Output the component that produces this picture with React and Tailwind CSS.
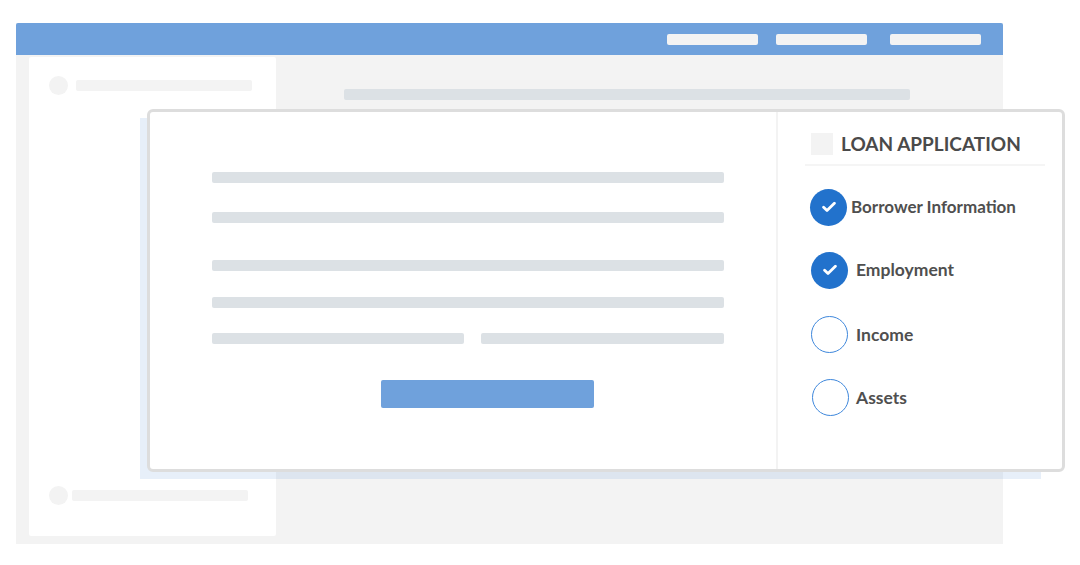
const bar = "h-[11px] rounded-[2px] bg-[#dce1e5]";
const steps = [
  { label: "Borrower Information", done: true, cls: "mt-[23px] ml-[32px]", text: "ml-[4px] -translate-y-[1px] text-[17px]" },
  { label: "Employment", done: true, cls: "mt-[26px] ml-[33px]", text: "ml-[8px] -translate-y-[1px] text-[17.5px]" },
  { label: "Income", done: false, cls: "mt-[27px] ml-[33px]", text: "ml-[8px] text-[17.5px]" },
  { label: "Assets", done: false, cls: "mt-[26px] ml-[34px]", text: "ml-[7px] text-[17.5px]" },
];

function Step({ label, done, cls, text }) {
  return (
    <div className={`flex items-center ${cls}`}>
      {done ? (
        <span className="flex h-[37px] w-[37px] items-center justify-center rounded-full bg-[#2272cc]">
          <svg width="14" height="11" viewBox="0 0 14 11" fill="none" className="-translate-y-[0.5px]">
            <path d="M1.6 5.8 5 9 12.4 1.8" stroke="#fff" strokeWidth="2.8" strokeLinecap="round" strokeLinejoin="round" />
          </svg>
        </span>
      ) : (
        <span className="h-[37px] w-[37px] rounded-full border-[1.5px] border-[#3f88dc]" />
      )}
      <span className={`${text} font-bold leading-none text-[#4f4f4f]`}>{label}</span>
    </div>
  );
}

export default function App() {
  return (
    <div className="relative h-[565px] w-[1080px] overflow-hidden bg-white pl-[16px] pt-[23px] font-['Lato',sans-serif]">
      <div className="flex h-[521px] w-[987px] flex-col bg-[#f3f3f3]">
        <header className="flex h-[32px] shrink-0 items-center justify-end rounded-t-[2px] bg-[#6fa1dc] pr-[22px]">
          <span className="h-[11px] w-[91px] rounded-[2px] bg-[#f3f3f3]" />
          <span className="ml-[18px] h-[11px] w-[91px] rounded-[2px] bg-[#f3f3f3]" />
          <span className="ml-[23px] h-[11px] w-[91px] rounded-[2px] bg-[#f3f3f3]" />
        </header>
        <div className="flex">
          <aside className="ml-[13px] mt-[2px] flex h-[479px] w-[247px] flex-col justify-between rounded-[2px] bg-white px-[20px] pb-[31px] pt-[19px]">
            <div className="flex items-center">
              <span className="h-[19px] w-[19px] rounded-full bg-[#f3f3f3]" />
              <span className="ml-[8px] h-[11px] w-[176px] rounded-[2px] bg-[#f3f3f3]" />
            </div>
            <div className="flex items-center">
              <span className="h-[19px] w-[19px] rounded-full bg-[#f3f3f3]" />
              <span className="ml-[4px] h-[11px] w-[176px] rounded-[2px] bg-[#f3f3f3]" />
            </div>
          </aside>
          <div className={`ml-[68px] mt-[34px] w-[566px] ${bar}`} />
        </div>
      </div>

      <div className="absolute left-[140px] top-[118px] h-[361px] w-[901px] bg-[#6fa1dc]/[.17]" />

      <section className="absolute left-[147px] top-[109px] flex h-[363px] w-[918px] rounded-[6px] border-[3px] border-[#dddddd] bg-white">
        <div className="w-[626px] pl-[62px] pt-[60px]">
          <div className={`w-[512px] ${bar}`} />
          <div className={`mt-[29px] w-[512px] ${bar}`} />
          <div className={`mt-[37px] w-[512px] ${bar}`} />
          <div className={`mt-[26px] w-[512px] ${bar}`} />
          <div className="mt-[25px] flex w-[512px] justify-between">
            <div className={`w-[252px] ${bar}`} />
            <div className={`w-[243px] ${bar}`} />
          </div>
          <div className="ml-[169px] mt-[36px] h-[28px] w-[213px] rounded-[2px] bg-[#6fa1dc]" />
        </div>
        <div className="flex-1 border-l-2 border-[#f3f3f3]">
          <div className="ml-[27px] flex w-[240px] items-center border-b-2 border-[#f5f5f5] pb-[9px] pl-[6px] pt-[21px]">
            <span className="h-[22px] w-[22px] bg-[#f3f3f3]" />
            <h1 className="ml-[8px] -translate-y-[1px] text-[19px] font-bold leading-none text-[#4a4a4a]">LOAN APPLICATION</h1>
          </div>
          {steps.map((s) => (
            <Step key={s.label} {...s} />
          ))}
        </div>
      </section>
    </div>
  );
}
